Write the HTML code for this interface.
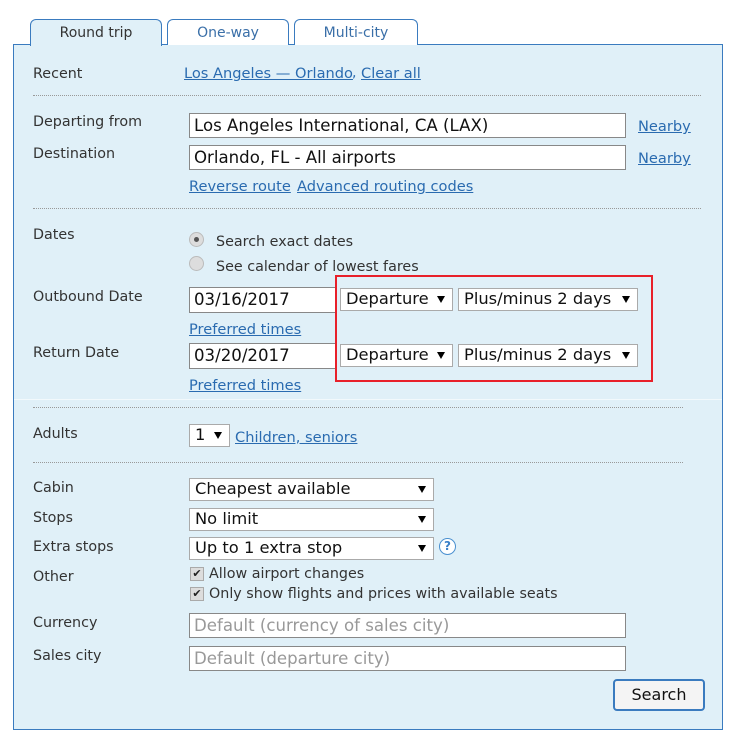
<!DOCTYPE html>
<html><head><style>
body{margin:0;width:734px;height:738px;background:#fff;position:relative;font-family:"DejaVu Sans","Liberation Sans",sans-serif;color:#333;overflow:hidden}
.a{position:absolute;white-space:nowrap}
.tab{position:absolute;top:19px;height:25px;border:1px solid #3a7bbf;border-bottom:none;border-radius:6px 6px 0 0;background:#fff;font-size:14px;text-align:center;line-height:26px;color:#3a6fa8}
.panel{position:absolute;left:13px;top:44px;width:708px;height:684px;border:1px solid #3a7bbf;background:#e0f0f8}
.lbl{font-size:14.3px;color:#333}
.lnk{font-size:14.6px;color:#2a6bb0;text-decoration:underline}
.inp{position:absolute;background:#fff;border:1px solid #888;font-size:16.6px;line-height:23px;padding-left:4px;box-sizing:border-box;color:#111}
.sel{position:absolute;background:#fff;border:1px solid #aaa;font-size:16.3px;line-height:20px;padding-left:5px;box-sizing:border-box;color:#111}
.sel:after{content:"";position:absolute;right:7px;top:7px;border-left:4px solid transparent;border-right:4px solid transparent;border-top:7px solid #000}
.dot{position:absolute;left:33px;width:668px;border-top:1px dotted #999}
</style></head><body>
<div class="panel"></div>
<div class="tab" style="left:30px;width:130px;background:#e0f0f8;height:26px;color:#333">Round trip</div>
<div class="tab" style="left:167px;width:120px">One-way</div>
<div class="tab" style="left:294px;width:122px">Multi-city</div>

<div class="a lbl" style="left:33px;top:66px">Recent</div>
<div class="a lnk" style="left:184px;top:65px">Los Angeles — Orlando</div><div class="a" style="left:352px;top:65px;font-size:14px;color:#2a6bb0">,</div>
<div class="a lnk" style="left:361px;top:65px">Clear all</div>
<div class="dot" style="top:95px"></div>

<div class="a lbl" style="left:33px;top:114px">Departing from</div>
<div class="inp" style="left:189px;top:113px;width:437px;height:25px">Los Angeles International, CA (LAX)</div>
<div class="a lnk" style="left:638px;top:118px">Nearby</div>
<div class="a lbl" style="left:33px;top:146px">Destination</div>
<div class="inp" style="left:189px;top:145px;width:437px;height:25px">Orlando, FL - All airports</div>
<div class="a lnk" style="left:638px;top:150px">Nearby</div>
<div class="a lnk" style="left:189px;top:178px">Reverse route</div>
<div class="a lnk" style="left:297px;top:178px">Advanced routing codes</div>
<div class="dot" style="top:208px"></div>

<div class="a lbl" style="left:33px;top:227px">Dates</div>
<div class="a" style="left:189px;top:232px;width:13px;height:13px;border-radius:50%;background:#ddd;border:1px solid #bbb"><div style="margin:4px;width:5px;height:5px;border-radius:50%;background:#555"></div></div>
<div class="a lbl" style="left:216px;top:234px">Search exact dates</div>
<div class="a" style="left:189px;top:256px;width:13px;height:13px;border-radius:50%;background:#ddd;border:1px solid #bbb"></div>
<div class="a lbl" style="left:216px;top:259px">See calendar of lowest fares</div>

<div class="a lbl" style="left:33px;top:289px">Outbound Date</div>
<div class="inp" style="left:189px;top:287px;width:147px;height:26px">03/16/2017</div>
<div class="sel" style="left:340px;top:288px;width:113px;height:23px">Departure</div>
<div class="sel" style="left:458px;top:288px;width:180px;height:23px">Plus/minus 2 days</div>
<div class="a lnk" style="left:189px;top:321px">Preferred times</div>
<div class="a lbl" style="left:33px;top:345px">Return Date</div>
<div class="inp" style="left:189px;top:343px;width:147px;height:26px">03/20/2017</div>
<div class="sel" style="left:340px;top:344px;width:113px;height:23px">Departure</div>
<div class="sel" style="left:458px;top:344px;width:180px;height:23px">Plus/minus 2 days</div>
<div class="a lnk" style="left:189px;top:377px">Preferred times</div>
<div class="a" style="left:335px;top:275px;width:314px;height:103px;border:2px solid #e8202a"></div>
<div class="a" style="left:14px;top:399px;width:708px;height:1px;background:#f2f9fc"></div>
<div class="a" style="left:33px;top:407px;width:650px;border-top:1px dotted #999"></div>

<div class="a lbl" style="left:33px;top:426px">Adults</div>
<div class="sel" style="left:189px;top:424px;width:41px;height:23px">1</div>
<div class="a lnk" style="left:235px;top:429px">Children, seniors</div>
<div class="a" style="left:33px;top:462px;width:650px;border-top:1px dotted #999"></div>

<div class="a lbl" style="left:33px;top:480px">Cabin</div>
<div class="sel" style="left:189px;top:478px;width:245px;height:23px">Cheapest available</div>
<div class="a lbl" style="left:33px;top:510px">Stops</div>
<div class="sel" style="left:189px;top:508px;width:245px;height:23px">No limit</div>
<div class="a lbl" style="left:33px;top:539px">Extra stops</div>
<div class="sel" style="left:189px;top:537px;width:245px;height:23px">Up to 1 extra stop</div>
<div class="a" style="left:439px;top:538px;width:15px;height:15px;border:1px solid #4a90d0;border-radius:50%;background:#fff;color:#3a80c8;font-size:12px;font-weight:bold;text-align:center;line-height:15px">?</div>
<div class="a lbl" style="left:33px;top:569px">Other</div>
<div class="a" style="left:190px;top:567px;width:12px;height:12px;border:1px solid #aaa;background:#ddd;font-size:11px;line-height:12px;text-align:center;color:#222">✔</div>
<div class="a lbl" style="left:209px;top:566px">Allow airport changes</div>
<div class="a" style="left:190px;top:587px;width:12px;height:12px;border:1px solid #aaa;background:#ddd;font-size:11px;line-height:12px;text-align:center;color:#222">✔</div>
<div class="a lbl" style="left:209px;top:586px">Only show flights and prices with available seats</div>

<div class="a lbl" style="left:33px;top:615px">Currency</div>
<div class="inp" style="left:189px;top:613px;width:437px;height:25px;color:#999">Default (currency of sales city)</div>
<div class="a lbl" style="left:33px;top:648px">Sales city</div>
<div class="inp" style="left:189px;top:646px;width:437px;height:25px;color:#999">Default (departure city)</div>
<div class="a" style="left:613px;top:679px;width:88px;height:28px;border:2px solid #3a7bbf;border-radius:4px;background:#f4f4f4;font-size:16px;text-align:center;line-height:28px;color:#111">Search</div>
</body></html>
